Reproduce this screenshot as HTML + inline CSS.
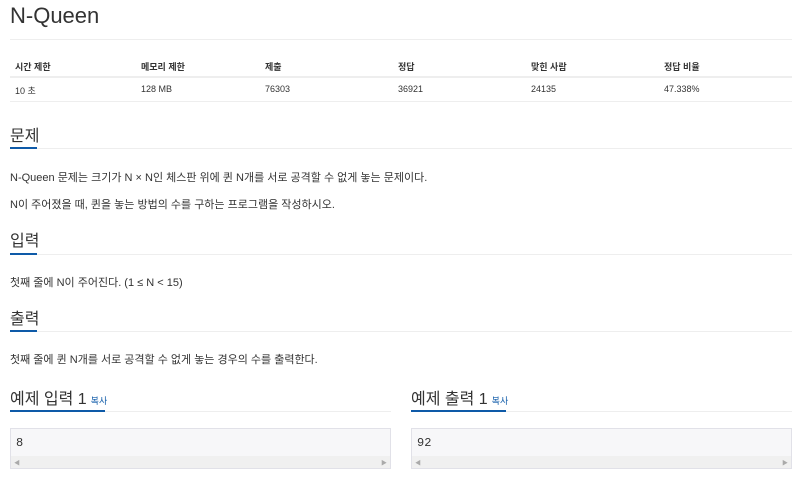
<!DOCTYPE html>
<html><head><meta charset="utf-8"><style>
*{margin:0;padding:0;box-sizing:border-box}
body{width:800px;height:480px;overflow:hidden;background:#fff;font-family:"Liberation Sans","Noto Sans CJK KR",sans-serif;color:#333;position:relative}
.a{position:absolute;white-space:nowrap}
.t{font-size:22px;color:#333;left:10px;top:3px}
.hr{position:absolute;height:1px;background:#eee}
.th{font-size:9px;font-weight:bold;top:60px}
.td{font-size:9px;top:84px}
.h{font-size:16px;color:#333}
.ul{position:absolute;height:2px;background:#0e5aa8}
.p{font-size:11px;color:#333}
.box{position:absolute;top:428px;height:41px;background:#f7f7f9;border:1px solid #e1e1e8}
.box .v{position:absolute;left:5px;top:7px;font-family:"Liberation Mono",monospace;font-size:12px}
.box .sb{position:absolute;left:0;right:0;bottom:0;height:12px;background:#f0f0f0;font-size:6px;color:#aaa}
.cp{font-size:9px;color:#0e5aa8;margin-left:4px}
</style></head><body>
<div class="a t">N-Queen</div>
<div class="hr" style="left:10px;width:782px;top:39px"></div>
<div class="a th" style="left:15px">시간 제한</div>
<div class="a th" style="left:141px">메모리 제한</div>
<div class="a th" style="left:265px">제출</div>
<div class="a th" style="left:398px">정답</div>
<div class="a th" style="left:531px">맞힌 사람</div>
<div class="a th" style="left:664px">정답 비율</div>
<div class="hr" style="left:10px;width:782px;top:76px;height:2px"></div>
<div class="a td" style="left:15px">10 초</div>
<div class="a td" style="left:141px">128 MB</div>
<div class="a td" style="left:265px">76303</div>
<div class="a td" style="left:398px">36921</div>
<div class="a td" style="left:531px">24135</div>
<div class="a td" style="left:664px">47.338%</div>
<div class="hr" style="left:10px;width:782px;top:101px"></div>

<div class="a h" style="left:10px;top:122px">문제</div>
<div class="hr" style="left:10px;width:782px;top:148px"></div>
<div class="ul" style="left:10px;width:27px;top:147px"></div>
<div class="a p" style="left:10px;top:169px">N-Queen 문제는 크기가 N × N인 체스판 위에 퀸 N개를 서로 공격할 수 없게 놓는 문제이다.</div>
<div class="a p" style="left:10px;top:196px">N이 주어졌을 때, 퀸을 놓는 방법의 수를 구하는 프로그램을 작성하시오.</div>

<div class="a h" style="left:10px;top:227px">입력</div>
<div class="hr" style="left:10px;width:782px;top:254px"></div>
<div class="ul" style="left:10px;width:27px;top:253px"></div>
<div class="a p" style="left:10px;top:274px">첫째 줄에 N이 주어진다. (1 ≤ N &lt; 15)</div>

<div class="a h" style="left:10px;top:305px">출력</div>
<div class="hr" style="left:10px;width:782px;top:331px"></div>
<div class="ul" style="left:10px;width:27px;top:330px"></div>
<div class="a p" style="left:10px;top:351px">첫째 줄에 퀸 N개를 서로 공격할 수 없게 놓는 경우의 수를 출력한다.</div>

<div class="a h" style="left:10px;top:385px">예제 입력 1<span class="cp">복사</span></div>
<div class="hr" style="left:10px;width:381px;top:411px"></div>
<div class="ul" style="left:10px;width:95px;top:410px"></div>
<div class="box" style="left:10px;width:381px"><div class="v">8</div><div class="sb"><span style="position:absolute;left:3px;top:2px">◀</span><span style="position:absolute;right:3px;top:2px">▶</span></div></div>

<div class="a h" style="left:411px;top:385px">예제 출력 1<span class="cp">복사</span></div>
<div class="hr" style="left:411px;width:381px;top:411px"></div>
<div class="ul" style="left:411px;width:95px;top:410px"></div>
<div class="box" style="left:411px;width:381px"><div class="v">92</div><div class="sb"><span style="position:absolute;left:3px;top:2px">◀</span><span style="position:absolute;right:3px;top:2px">▶</span></div></div>
</body></html>
